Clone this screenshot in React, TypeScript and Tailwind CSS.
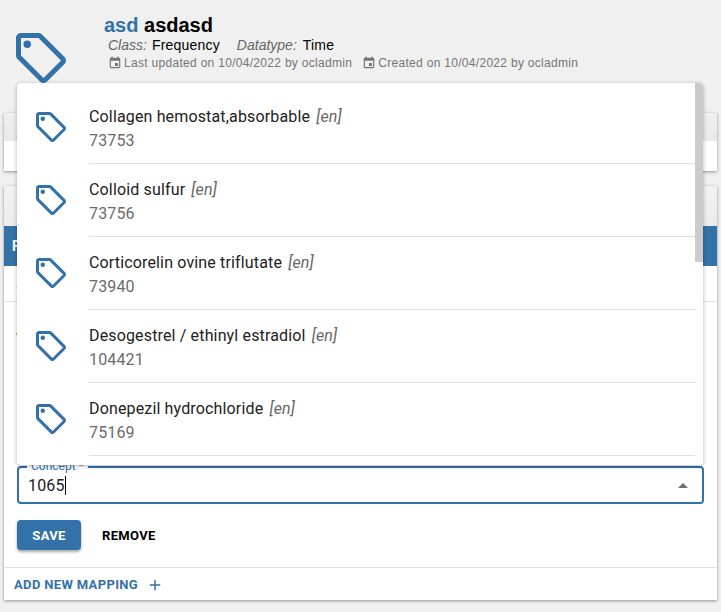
import React from "react";

const Tag = ({ className }: { className: string }) => (
  <svg viewBox="0 0 24 24" className={className} fill="#3372a8">
    <path d="M21.41 11.58l-9-9C12.05 2.22 11.55 2 11 2H4c-1.1 0-2 .9-2 2v7c0 .55.22 1.05.59 1.42l9 9c.36.36.86.58 1.41.58s1.05-.22 1.41-.59l7-7c.37-.36.59-.86.59-1.41s-.23-1.06-.59-1.42zM13 20.01L4 11V4h7v-.01l9 9-7 7.02z" />
    <circle cx="6.5" cy="6.5" r="1.5" />
  </svg>
);

const Cal = () => (
  <svg viewBox="0 0 24 24" className="w-[14px] h-[14px] shrink-0" fill="#757575">
    <path d="M17 12h-5v5h5v-5zM16 1v2H8V1H6v2H5c-1.11 0-1.99.9-1.99 2L3 19c0 1.1.89 2 2 2h14c1.1 0 2-.9 2-2V5c0-1.1-.9-2-2-2h-1V1h-2zm3 18H5V8h14v11z" />
  </svg>
);

const items = [
  ["Collagen hemostat,absorbable", "73753"],
  ["Colloid sulfur", "73756"],
  ["Corticorelin ovine triflutate", "73940"],
  ["Desogestrel / ethinyl estradiol", "104421"],
  ["Donepezil hydrochloride", "75169"],
];

export default function App() {
  return (
    <div className="relative w-[721px] h-[612px] overflow-hidden bg-[#f0f0f0] font-['Liberation_Sans',Arial,sans-serif]">
      <header className="h-[113px] flex pl-[11px] pt-[14px]">
        <Tag className="w-[60px] h-[60px] mt-[14px] shrink-0" />
        <div className="ml-[33px]">
          <h1 className="text-[20px] leading-[23px] font-bold text-black">
            <span className="text-[#3372a8]">asd</span> asdasd
          </h1>
          <div className="flex ml-[4px] text-[14px] leading-[16px] text-black tracking-[0.2px]">
            <span><i className="text-[#666] pr-[5px] tracking-normal">Class:</i>Frequency</span>
            <span className="ml-[17px]"><i className="text-[#666] pr-[6px] tracking-normal">Datatype:</i>Time</span>
          </div>
          <div className="flex items-center ml-[4px] mt-[3px] text-[12px] leading-[14px] tracking-[0.3px] text-[#757575]">
            <Cal />
            <span className="ml-[2px]">Last updated on 10/04/2022 by ocladmin</span>
            <span className="ml-[10px]"><Cal /></span>
            <span className="ml-[2px]">Created on 10/04/2022 by ocladmin</span>
          </div>
        </div>
      </header>

      <section className="mx-[4px] h-[58px] shadow-[0_1px_3px_rgba(0,0,0,0.4)] flex flex-col">
        <div className="h-[28px] bg-gradient-to-b from-[#f0f0f0] to-[#e9e9e9]" />
        <div className="flex-1 bg-white" />
      </section>

      <section className="mx-[4px] mt-[15px] h-[414px] bg-white shadow-[0_1px_3px_rgba(0,0,0,0.4)] flex flex-col">
        <div className="h-[40px] bg-gradient-to-b from-[#f2f2f2] to-[#ebebeb]" />
        <div className="h-[40px] bg-[#3372a8] flex items-center pl-[8px] text-white font-bold text-[14px] font-['Roboto',sans-serif]">P</div>
        <div className="h-[36px] border-b border-[#e0e0e0] pl-[12px] pt-[21px]">
          <div className="w-px h-px bg-[#f5d76e]" />
        </div>
        <div className="pl-[12px] pt-[31px] h-[164px]">
          <div className="w-px h-[2px] bg-[#f59e42]" />
        </div>
        <div className="relative mx-[13px] h-[38px] rounded-[4px] border-2 border-[#3372a8] flex items-center pl-[9px] pr-[14px] font-['Roboto',sans-serif] text-[16px] text-[#222]">
          <span className="absolute left-[8px] -top-[9px] bg-white px-[4px] text-[12px] leading-[14px] text-[#3372a8]">Concept *</span>
          <span className="pt-[1px] tracking-[0.15px]">1065</span>
          <span className="w-px h-[19px] bg-black" />
          <svg viewBox="0 0 10 5" className="ml-auto w-[10px] h-[5px]" fill="#6f6f6f"><path d="M0 5 5 0l5 5z" /></svg>
        </div>
        <div className="flex items-center mx-[13px] mt-[16px] h-[30px] font-['Roboto',sans-serif] text-[13px] font-bold tracking-[0.35px]">
          <button className="w-[64px] h-[30px] pt-[1px] rounded-[4px] bg-[#3372a8] text-white shadow-[0_2px_3px_rgba(0,0,0,0.35)]">SAVE</button>
          <button className="ml-[21px] pt-[1px] text-black">REMOVE</button>
        </div>
        <div className="mt-[17px] flex-1 border-t border-[#e0e0e0] flex items-center pl-[10px] pt-[1px] font-['Roboto',sans-serif] text-[13px] font-bold tracking-[0.35px] text-[#3372a8]">
          <span>ADD NEW MAPPING</span>
          <svg viewBox="0 0 24 24" className="ml-[8px] w-[18px] h-[18px]" fill="#3372a8"><path d="M19 13h-6v6h-2v-6H5v-2h6V5h2v6h6v2z" /></svg>
        </div>
      </section>

      <div className="absolute left-[17px] top-[83px] w-[686px] h-[382px] rounded-[4px] bg-white overflow-hidden shadow-[0_1px_4px_rgba(0,0,0,0.3)] font-['Roboto',sans-serif]">
        <div className="absolute right-0 top-0 w-[8px] h-[179px] bg-[#cbcbcb]" />
        <ul className="pl-[16px] pr-[8px] pt-[8px]">
          {items.map(([name, code]) => (
            <li key={code} className="flex h-[73px] items-start">
              <Tag className="w-[36px] h-[36px] mt-[18px] shrink-0" />
              <div className="ml-[20px] flex-1 h-[73px] border-b border-[#e0e0e0] pt-[14px]">
                <div className="text-[16px] leading-[24px] tracking-[0.15px] text-[#222]">
                  {name} <i className="text-[#666] pl-[2px]">[en]</i>
                </div>
                <div className="text-[16px] leading-[24px] tracking-[0.15px] text-[#6b6b6b]">{code}</div>
              </div>
            </li>
          ))}
        </ul>
      </div>
    </div>
  );
}
